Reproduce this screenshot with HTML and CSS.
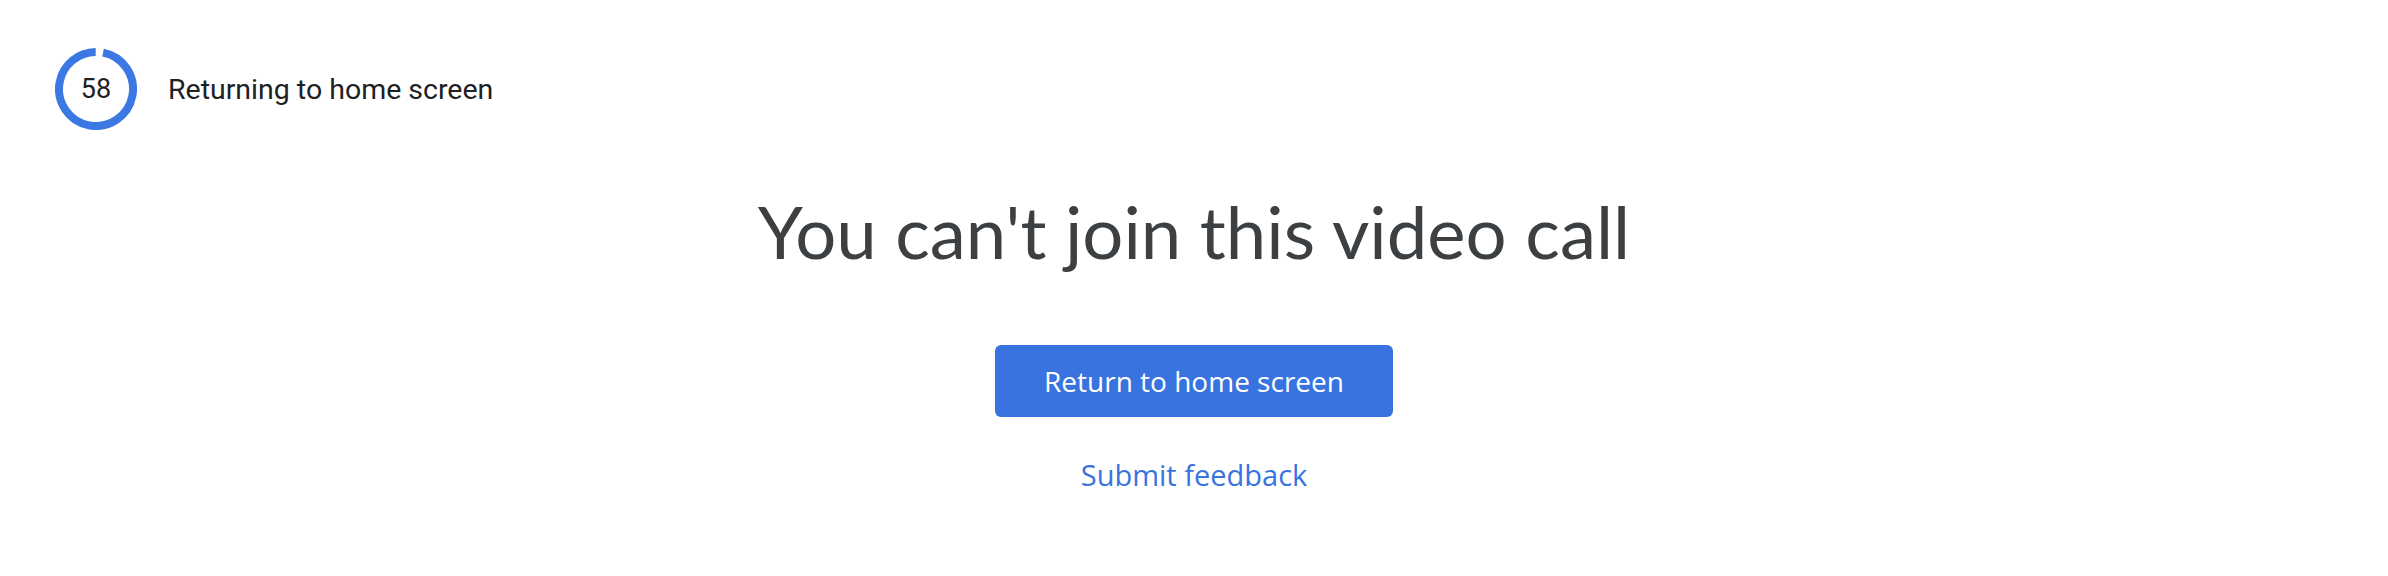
FILE: index.html
```html
<!DOCTYPE html>
<html lang="en">
<head>
<meta charset="utf-8">
<title>You can't join this video call</title>
<link rel="stylesheet" href="styles.css">
</head>
<body>
<div class="page">
  <header class="status">
    <div class="countdown">
      <svg class="ring" width="82" height="82" viewBox="0 0 82 82" aria-hidden="true">
        <circle cx="41" cy="41" r="37" fill="none" stroke="#3c78e3" stroke-width="8" stroke-dasharray="224.7 232.5" transform="rotate(-79 41 41)"/>
      </svg>
      <span class="count">58</span>
    </div>
    <span class="status-text">Returning to home screen</span>
  </header>
  <main class="content">
    <h1 class="title">You can't join this video call</h1>
    <button class="primary">Return to home screen</button>
    <a class="link" href="#">Submit feedback</a>
  </main>
</div>
</body>
</html>
```
FILE: styles.css
```css
html, body {
  margin: 0;
  padding: 0;
  background: #ffffff;
}
.page {
  display: flex;
  flex-direction: column;
}
.status {
  display: flex;
  align-items: center;
  gap: 31px;
  padding: 48px 0 0 55px;
}
.countdown {
  position: relative;
  width: 82px;
  height: 82px;
  display: flex;
  align-items: center;
  justify-content: center;
}
.ring {
  position: absolute;
  left: 0;
  top: 0;
}
.count {
  font-family: Roboto, "Liberation Sans", sans-serif;
  font-size: 27px;
  color: #202124;
}
.status-text {
  font-family: Roboto, "Liberation Sans", sans-serif;
  font-size: 28.5px;
  color: #202124;
}
.content {
  display: flex;
  flex-direction: column;
  align-items: center;
}
.title {
  margin: 51px 0 0;
  font-family: Lato, "Open Sans", sans-serif;
  font-weight: 400;
  font-size: 72.5px;
  line-height: 100px;
  color: #3c4043;
}
.primary {
  margin-top: 64px;
  width: 398px;
  height: 72px;
  border: none;
  border-radius: 6px;
  background: #3873e0;
  color: #ffffff;
  font-family: "Open Sans", Roboto, sans-serif;
  font-size: 28px;
  font-weight: 500;
  cursor: pointer;
}
.link {
  margin-top: 38px;
  font-family: "Open Sans", Roboto, sans-serif;
  font-size: 29px;
  font-weight: 500;
  line-height: 40px;
  color: #3873e0;
  text-decoration: none;
}
```
